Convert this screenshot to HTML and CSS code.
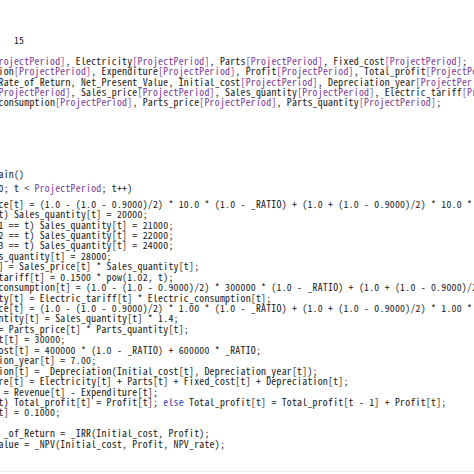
FILE: index.html
```html
<!DOCTYPE html>
<html>
<head>
<meta charset="utf-8">
<link rel="stylesheet" href="styles.css">
</head>
<body>
<div class="frame">
  <div class="code">
    <div class="top">
      <div class="ln">    15</div>
      <div class="ln"> </div>
      <div class="ln"><span class="mac">ProjectPeriod]</span>, Electricity<span class="mac">[ProjectPeriod]</span>, Parts<span class="mac">[ProjectPeriod]</span>, Fixed_cost<span class="mac">[ProjectPeriod]</span>;</div>
      <div class="ln">tion<span class="mac">[ProjectPeriod]</span>, Expenditure<span class="mac">[ProjectPeriod]</span>, Profit<span class="mac">[ProjectPeriod]</span>, Total_profit<span class="mac">[ProjectPeriod]</span>;</div>
      <div class="ln">_Rate_of_Return, Net_Present_Value, Initial_cost<span class="mac">[ProjectPeriod]</span>, Depreciation_year<span class="mac">[ProjectPeriod]</span>;</div>
      <div class="ln"><span class="mac">[ProjectPeriod]</span>, Sales_price<span class="mac">[ProjectPeriod]</span>, Sales_quantity<span class="mac">[ProjectPeriod]</span>, Electric_tariff<span class="mac">[ProjectPeriod]</span>,</div>
      <div class="ln">_consumption<span class="mac">[ProjectPeriod]</span>, Parts_price<span class="mac">[ProjectPeriod]</span>, Parts_quantity<span class="mac">[ProjectPeriod]</span>;</div>
    </div>
    <div class="ln main">main()</div>
    <div class="ln loop"> 0; t &lt; <span class="mac">ProjectPeriod</span>; t++)</div>
    <div class="body">
      <div class="ln">ice[t] = (1.0 - (1.0 - 0.9000)/2) * 10.0 * (1.0 - _RATIO) + (1.0 + (1.0 - 0.9000)/2) * 10.0 * _RATIO;</div>
      <div class="ln"> t) Sales_quantity[t] = 20000;</div>
      <div class="ln">(1 == t) Sales_quantity[t] = 21000;</div>
      <div class="ln">(2 == t) Sales_quantity[t] = 22000;</div>
      <div class="ln">(3 == t) Sales_quantity[t] = 24000;</div>
      <div class="ln">es_quantity[t] = 28000;</div>
      <div class="ln">t] = Sales_price[t] * Sales_quantity[t];</div>
      <div class="ln">_tariff[t] = 0.1500 * pow(1.02, t);</div>
      <div class="ln">_consumption[t] = (1.0 - (1.0 - 0.9000)/2) * 300000 * (1.0 - _RATIO) + (1.0 + (1.0 - 0.9000)/2) * 300000 * _RATIO;</div>
      <div class="ln">ity[t] = Electric_tariff[t] * Electric_consumption[t];</div>
      <div class="ln">ice[t] = (1.0 - (1.0 - 0.9000)/2) * 1.00 * (1.0 - _RATIO) + (1.0 + (1.0 - 0.9000)/2) * 1.00 * _RATIO;</div>
      <div class="ln">antity[t] = Sales_quantity[t] * 1.4;</div>
      <div class="ln"> = Parts_price[t] * Parts_quantity[t];</div>
      <div class="ln">st[t] = 30000;</div>
      <div class="ln">cost[t] = 400000 * (1.0 - _RATIO) + 600000 * _RATIO;</div>
      <div class="ln">tion_year[t] = 7.00;</div>
      <div class="ln">tion[t] = _Depreciation(Initial_cost[t], Depreciation_year[t]);</div>
      <div class="ln">ure[t] = Electricity[t] + Parts[t] + Fixed_cost[t] + Depreciation[t];</div>
      <div class="ln">] = Revenue[t] - Expenditure[t];</div>
      <div class="ln"> t) Total_profit[t] = Profit[t]; <span class="kw">else</span> Total_profit[t] = Total_profit[t - 1] + Profit[t];</div>
      <div class="ln">[t] = 0.1000;</div>
      <div class="ln"> </div>
      <div class="ln">  _of_Return = _IRR(Initial_cost, Profit);</div>
      <div class="ln">Value = _NPV(Initial_cost, Profit, NPV_rate);</div>
    </div>
  </div>
</div>
</body>
</html>
```

FILE: styles.css
```css
html, body {
  margin: 0;
  padding: 0;
  background: #ffffff;
}

.frame {
  width: 474px;
  height: 471px;
  overflow: hidden;
  background: #ffffff;
  border-bottom: 1px solid #ebebeb;
}

.code {
  padding-top: 34.8px;
  margin-left: -6.65px;
  font-family: "Noto Sans Mono CJK KR", "Noto Sans Mono CJK SC", monospace;
  font-size: 9.8px;
  letter-spacing: 0.25px;
  color: #1a1a1a;
}

.ln {
  height: 10.45px;
  line-height: 10.45px;
  white-space: pre;
}

.main {
  margin-top: 60.85px;
}

.loop {
  margin-top: 4.05px;
}

.body {
  margin-top: 5px;
}

.mac {
  color: #7d3b96;
}

.kw {
  color: #2f3fb0;
}
```
